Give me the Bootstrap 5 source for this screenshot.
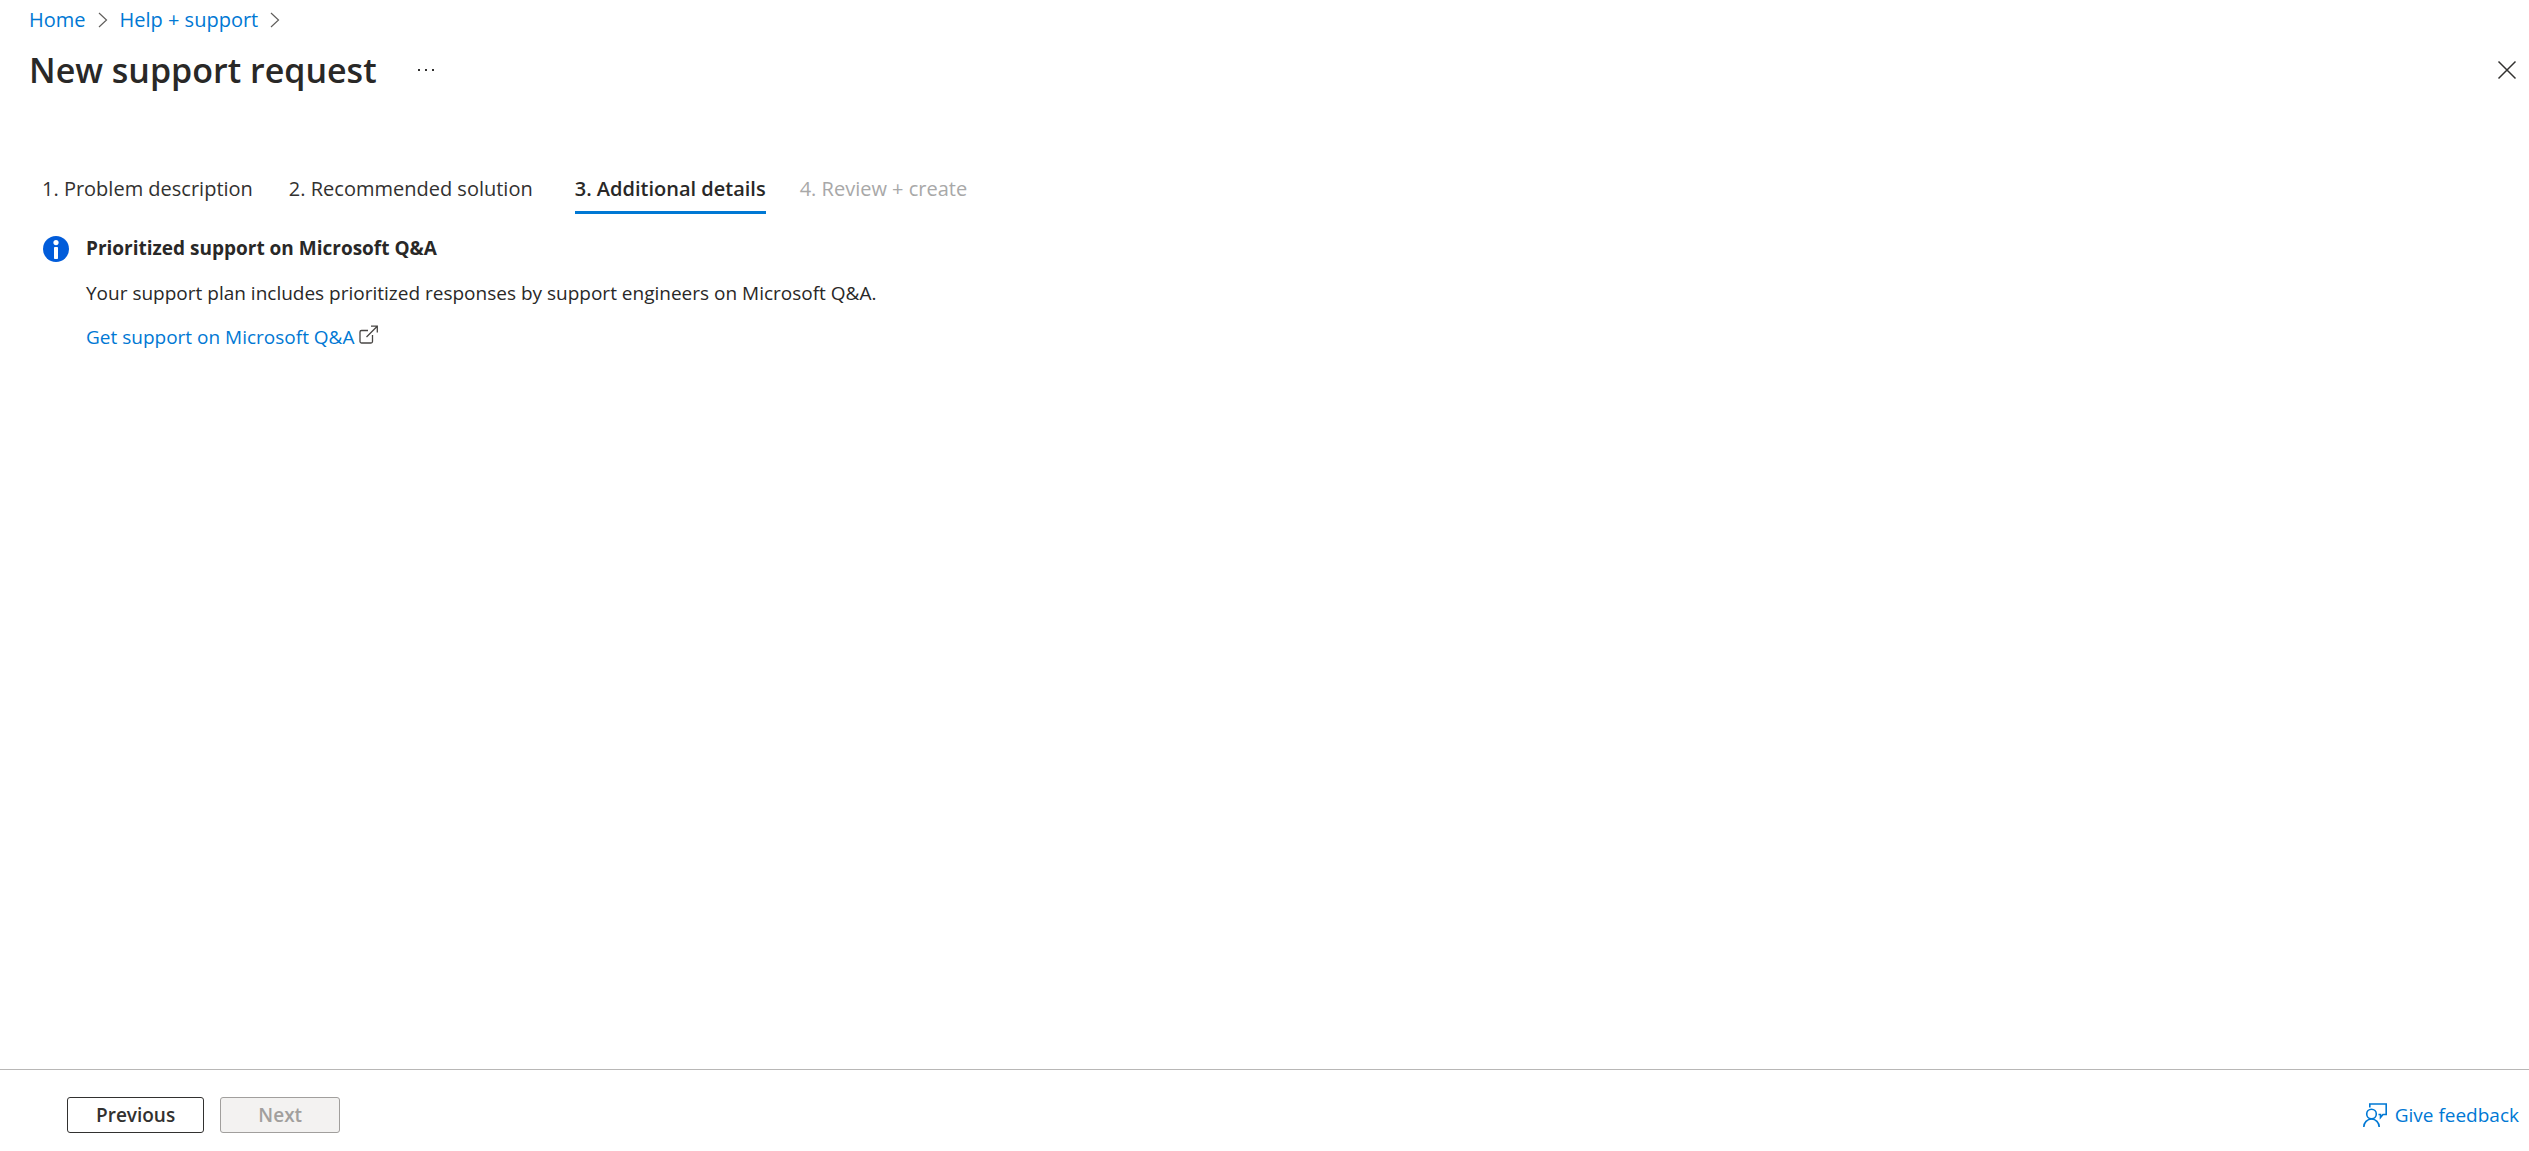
<!DOCTYPE html>
<html lang="en">
<head>
<meta charset="utf-8">
<meta name="viewport" content="width=device-width, initial-scale=1">
<title>New support request</title>
<link href="https://cdn.jsdelivr.net/npm/bootstrap@5.3.0/dist/css/bootstrap.min.css" rel="stylesheet">
<style>
  body { font-family: "Segoe UI", "Open Sans", "Noto Sans", sans-serif; font-size: 19px; line-height: 28px; color: #292827; }
  a { color: #0078d4; text-decoration: none; }
  a:hover { text-decoration: underline; }
  .top-path { font-size: 20px; padding: 6px 29px 0; gap: 12px; }
  .title-bar { padding: 12px 12px 0 29px; }
  .title-bar h1 { font-size: 34px; line-height: 48px; font-weight: 600; }
  .plain-btn { border: 0; background: none; padding: 0; line-height: 0; color: #323130; }
  .more-btn { margin-left: 40px; }
  .wizard-steps { font-size: 20px; padding: 73px 42px 0; }
  .wizard-steps .nav-link { color: #323130; padding: 8px 0; border-bottom: 3px solid transparent; line-height: 28px; margin-right: 36px; }
  .wizard-steps .nav-link.active { color: #292827; font-weight: 600; border-color: #0078d4; margin-left: 6px; margin-right: 34px; }
  .wizard-steps .nav-link.disabled { color: #a8a8a8; }
  .notice { padding: 20px 42px; gap: 16px; }
  .notice h2 { font-size: 19px; line-height: 28px; font-weight: 700; margin-bottom: 17px; }
  .notice p { margin-bottom: 16px; }
  .action-bar { border-top: 1px solid #b8b7b6; padding: 27px 10px 18px 67px; }
  .step-btn { height: 36px; padding: 0 28px; font-size: 19px; line-height: 28px; font-weight: 600; border: 1px solid #323130; border-radius: 3px; background: #fff; color: #323130; min-width: 120px; }
  .step-btn:disabled { background: #f3f2f1; border-color: #a19f9d; color: #a19f9d; opacity: 1; }
</style>
</head>
<body class="bg-white d-flex flex-column min-vh-100">
<header>
  <nav class="top-path d-flex align-items-center" aria-label="Breadcrumb">
    <a href="#">Home</a>
    <svg width="10" height="16" viewBox="0 0 10 16" fill="none" stroke="#605e5c" stroke-width="1.2" aria-hidden="true"><path d="M1 1l7.500 7L1 15"/></svg>
    <a href="#">Help + support</a>
    <svg width="10" height="16" viewBox="0 0 10 16" fill="none" stroke="#605e5c" stroke-width="1.2" aria-hidden="true"><path d="M1 1l7.500 7L1 15"/></svg>
  </nav>
  <div class="title-bar d-flex align-items-center">
    <h1 class="m-0">New support request</h1>
    <button class="plain-btn more-btn" type="button" aria-label="More actions"><svg width="18" height="4" viewBox="0 0 18 4" fill="#323130"><path d="M1 1h2v2H1zM8 1h2v2H8zM15 1h2v2h-2z"/></svg></button>
    <button class="plain-btn ms-auto" type="button" aria-label="Close"><svg width="20" height="20" viewBox="0 0 20 20" fill="none" stroke="#323130" stroke-width="1.500"><path d="M1.500 1.500l17 17M18.500 1.500l-17 17"/></svg></button>
  </div>
</header>
<main class="flex-grow-1">
  <nav class="wizard-steps nav" aria-label="Steps">
    <a class="nav-link" href="#">1. Problem description</a>
    <a class="nav-link" href="#">2. Recommended solution</a>
    <a class="nav-link active" aria-current="step" href="#">3. Additional details</a>
    <a class="nav-link disabled" aria-disabled="true" href="#">4. Review + create</a>
  </nav>
  <section class="notice d-flex align-items-start">
    <svg class="flex-shrink-0" width="28" height="30" viewBox="0 0 28 30" aria-hidden="true"><circle cx="14" cy="15" r="13" fill="#015cda"/><circle cx="14" cy="8.600" r="2.600" fill="#fff"/><rect x="12" y="13" width="4" height="12" rx=".8" fill="#fff"/></svg>
    <div>
      <h2>Prioritized support on Microsoft Q&amp;A</h2>
      <p>Your support plan includes prioritized responses by support engineers on Microsoft Q&amp;A.</p>
      <a class="d-inline-flex align-items-center gap-1" href="#">Get support on Microsoft Q&amp;A
        <svg class="mb-1" width="20" height="20" viewBox="0 0 20 20" fill="none" stroke="#484644" stroke-width="1.300" aria-hidden="true"><path d="M10 5.500H3.500a1.500 1.500 0 0 0-1.500 1.500v9.500A1.500 1.500 0 0 0 3.500 18H13a1.500 1.500 0 0 0 1.500-1.500V10M8.500 12L19 1.500M13 1.200h6.300v6.300"/></svg>
      </a>
    </div>
  </section>
</main>
<footer class="action-bar d-flex align-items-center">
  <div class="d-flex">
    <button class="step-btn me-3" type="button">Previous</button>
    <button class="step-btn" type="button" disabled>Next</button>
  </div>
  <a class="ms-auto d-flex align-items-center gap-2" href="#">
    <svg width="24" height="24" viewBox="0 0 24 24" fill="none" stroke="#0078d4" stroke-width="1.600" aria-hidden="true"><path d="M6.800 4.500V1H23.200V11.500H20L17.500 14.500V11.500H15.500"/><circle cx="8.500" cy="11" r="4.800"/><path d="M.8 24a7.700 8 0 0 1 15.400 0"/></svg>
    Give feedback
  </a>
</footer>
<script src="https://cdn.jsdelivr.net/npm/bootstrap@5.3.0/dist/js/bootstrap.bundle.min.js"></script>
</body>
</html>
